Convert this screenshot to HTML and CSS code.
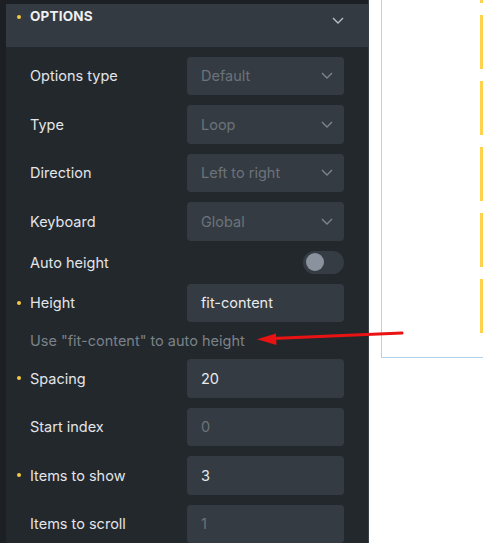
FILE: index.html
```html
<!DOCTYPE html>
<html>
<head>
<meta charset="utf-8">
<link rel="stylesheet" href="styles.css">
</head>
<body>
<div class="page">
  <div class="edge"></div>
  <aside class="panel">
    <div class="panel-top"></div>
    <div class="section-head">
      <span class="dot"></span>
      <span class="section-title">OPTIONS</span>
      <svg class="head-chev" width="12" height="7" viewBox="0 0 12 7"><path d="M1 1 L6 6 L11 1" fill="none" stroke="#b9bec4" stroke-width="1.4"/></svg>
    </div>
    <div class="controls">
      <div class="row">
        <div class="label">Options type</div>
        <div class="select"><span class="ph">Default</span><svg class="chev" width="12" height="7" viewBox="0 0 12 7"><path d="M1 1 L6 6 L11 1" fill="none" stroke="#7d848c" stroke-width="1.4"/></svg></div>
      </div>
      <div class="row">
        <div class="label">Type</div>
        <div class="select"><span class="ph">Loop</span><svg class="chev" width="12" height="7" viewBox="0 0 12 7"><path d="M1 1 L6 6 L11 1" fill="none" stroke="#7d848c" stroke-width="1.4"/></svg></div>
      </div>
      <div class="row">
        <div class="label">Direction</div>
        <div class="select"><span class="ph">Left to right</span><svg class="chev" width="12" height="7" viewBox="0 0 12 7"><path d="M1 1 L6 6 L11 1" fill="none" stroke="#7d848c" stroke-width="1.4"/></svg></div>
      </div>
      <div class="row">
        <div class="label">Keyboard</div>
        <div class="select"><span class="ph">Global</span><svg class="chev" width="12" height="7" viewBox="0 0 12 7"><path d="M1 1 L6 6 L11 1" fill="none" stroke="#7d848c" stroke-width="1.4"/></svg></div>
      </div>
      <div class="row row-toggle">
        <div class="label">Auto height</div>
        <div class="toggle-cell"><span class="toggle"><span class="knob"></span></span></div>
      </div>
      <div class="row">
        <div class="label mod">Height</div>
        <div class="input"><span class="val">fit-content</span></div>
      </div>
      <div class="help">Use "fit-content" to auto height</div>
      <div class="row">
        <div class="label mod">Spacing</div>
        <div class="input"><span class="val">20</span></div>
      </div>
      <div class="row">
        <div class="label">Start index</div>
        <div class="input"><span class="ph">0</span></div>
      </div>
      <div class="row">
        <div class="label mod">Items to show</div>
        <div class="input"><span class="val">3</span></div>
      </div>
      <div class="row">
        <div class="label">Items to scroll</div>
        <div class="input"><span class="ph">1</span></div>
      </div>
    </div>
  </aside>
  <main class="canvas">
    <div class="frame">
      <div class="dashes"></div>
    </div>
  </main>
  <svg class="arrow" width="483" height="543" viewBox="0 0 483 543">
    <line x1="272" y1="338.6" x2="402" y2="333" stroke="#ea1313" stroke-width="3" stroke-linecap="round"/>
    <polygon points="257,339.3 276,333.5 276.4,345" fill="#ea1313"/>
  </svg>
</div>
</body>
</html>
```

FILE: styles.css
```css
html, body {
  margin: 0;
  padding: 0;
  background: #ffffff;
}

.page {
  position: relative;
  display: flex;
  width: 483px;
  height: 543px;
  overflow: hidden;
  font-family: Inter, "Noto Sans", "Liberation Sans", sans-serif;
}

.edge {
  width: 6px;
  flex: none;
  background: #1c2024;
}

.panel {
  width: 362px;
  flex: none;
  background: #23282d;
  border-right: 1px solid #3b4047;
  display: flex;
  flex-direction: column;
}

.panel-top {
  height: 4px;
  background: #1c2024;
}

.section-head {
  height: 43px;
  background: #343a41;
  display: flex;
  align-items: flex-start;
  padding: 0 0 0 10px;
  position: relative;
}

.section-head .dot {
  width: 4px;
  height: 4px;
  border-radius: 50%;
  background: #f4c842;
  margin-top: 11px;
  margin-left: 1px;
}

.section-title {
  margin-left: 9px;
  line-height: 24px;
  font-size: 13.5px;
  font-weight: 700;
  color: #eef0f2;
  letter-spacing: 0.2px;
}

.head-chev {
  position: absolute;
  left: 326px;
  top: 13px;
}

.controls {
  display: flex;
  flex-direction: column;
  gap: 10px;
  padding: 10px 24px 0 0;
}

.row {
  display: grid;
  grid-template-columns: 181px 157px;
  align-items: center;
  height: 38.5px;
}

.row-toggle {
  height: 23px;
}

.label {
  position: relative;
  padding-left: 24px;
  font-size: 14.5px;
  color: #e2e5e9;
}

.label.mod::before {
  content: "";
  position: absolute;
  left: 11px;
  top: 50%;
  width: 4px;
  height: 4px;
  margin-top: -2px;
  border-radius: 50%;
  background: #f4c842;
}

.select, .input {
  height: 38.5px;
  box-sizing: border-box;
  background: #353b42;
  border-radius: 4px;
  display: flex;
  align-items: center;
  justify-content: space-between;
  padding: 0 11px 0 14px;
  font-size: 14.5px;
}

.ph {
  color: #6c737b;
}

.val {
  color: #e8eaec;
}

.toggle-cell {
  display: flex;
  justify-content: flex-end;
}

.toggle {
  width: 41px;
  height: 23px;
  border-radius: 12px;
  background: #363c43;
  display: flex;
  align-items: center;
  padding-left: 2.5px;
  box-sizing: border-box;
}

.knob {
  width: 18px;
  height: 18px;
  border-radius: 50%;
  background: #8a939d;
}

.help {
  padding-left: 24px;
  font-size: 14.5px;
  line-height: 17px;
  color: #7b828a;
}

.canvas {
  flex: 1;
  padding-left: 12px;
  background: #ffffff;
}

.frame {
  height: 358px;
  box-sizing: border-box;
  border-left: 1px solid #b3d3ec;
  border-bottom: 1px solid #b3d3ec;
  display: flex;
  justify-content: flex-end;
  align-items: flex-start;
}

.dashes {
  width: 4px;
  height: 334px;
  margin-right: -1px;
  background-image: linear-gradient(to bottom, #ffd24e 0, #ffd24e 54px, transparent 54px);
  background-size: 4px 66px;
  background-position: 0 15px;
  background-repeat: repeat-y;
}

.arrow {
  position: absolute;
  left: 0;
  top: 0;
  pointer-events: none;
}
```
